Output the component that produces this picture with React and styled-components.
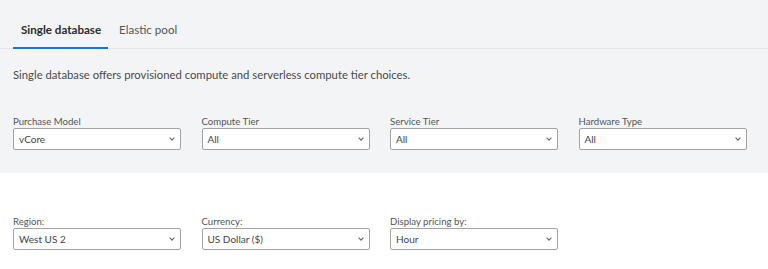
import React from "react";
import styled, { createGlobalStyle } from "styled-components";

const GlobalStyle = createGlobalStyle`
  html, body {
    margin: 0;
    padding: 0;
    background: #ffffff;
    font-family: Lato, "Open Sans", sans-serif;
    color: #323130;
  }
`;

const Page = styled.div`
  width: 768px;
  height: 269px;
  overflow: hidden;
  background: #ffffff;
`;

const Top = styled.section`
  background: #f3f4f6;
  height: 173px;
  padding-top: 19px;
  box-sizing: border-box;
`;

const Tabs = styled.div`
  display: flex;
  border-bottom: 1px solid #e4e5e7;
  height: 30px;
  box-sizing: border-box;
`;

const Tab = styled.div`
  padding: 0 0 0 ${(p) => p.pad}px;
  margin-left: ${(p) => (p.first ? "13px" : "0")};
  width: ${(p) => p.width}px;
  box-sizing: border-box;
  font-size: 11.6px;
  line-height: 22px;
  font-weight: ${(p) => (p.active ? 700 : 400)};
  color: ${(p) => (p.active ? "#2b2b2b" : "#555555")};
  border-bottom: 2px solid ${(p) => (p.active ? "#1a73d6" : "transparent")};
  margin-bottom: -1px;
  white-space: nowrap;
`;

const Description = styled.p`
  margin: 17px 0 0 13px;
  font-size: 11.3px;
  line-height: 18px;
  color: #4a4a4a;
`;

const Row = styled.div`
  display: grid;
  grid-template-columns: repeat(4, 168px);
  column-gap: 20.5px;
  padding: 0 13px;
  margin-top: ${(p) => p.top}px;
`;

const Field = styled.label`
  display: flex;
  flex-direction: column;
`;

const Label = styled.span`
  font-size: 9.6px;
  line-height: 12px;
  color: #555555;
  margin-bottom: 0;
`;

const SelectBox = styled.div`
  height: 22px;
  box-sizing: border-box;
  border: 1px solid #a3a3a3;
  border-radius: 2px;
  background: #ffffff;
  display: flex;
  align-items: center;
  justify-content: space-between;
  padding: 0 5px 0 5px;
  font-size: 10px;
  color: #444444;
`;

const Chevron = () => (
  <svg width="6" height="4" viewBox="0 0 6 4" fill="none">
    <path d="M0.6 0.7 L3 3.1 L5.4 0.7" stroke="#666" strokeWidth="1.1" />
  </svg>
);

const Select = ({ label, value }) => (
  <Field>
    <Label>{label}</Label>
    <SelectBox>
      <span>{value}</span>
      <Chevron />
    </SelectBox>
  </Field>
);

export default function App() {
  return (
    <Page>
      <GlobalStyle />
      <Top>
        <Tabs>
          <Tab first active pad={8} width={95}>Single database</Tab>
          <Tab pad={11} width={80}>Elastic pool</Tab>
        </Tabs>
        <Description>
          Single database offers provisioned compute and serverless compute tier choices.
        </Description>
        <Row top={32}>
          <Select label="Purchase Model" value="vCore" />
          <Select label="Compute Tier" value="All" />
          <Select label="Service Tier" value="All" />
          <Select label="Hardware Type" value="All" />
        </Row>
      </Top>
      <Row top={43}>
        <Select label="Region:" value="West US 2" />
        <Select label="Currency:" value="US Dollar ($)" />
        <Select label="Display pricing by:" value="Hour" />
      </Row>
    </Page>
  );
}
